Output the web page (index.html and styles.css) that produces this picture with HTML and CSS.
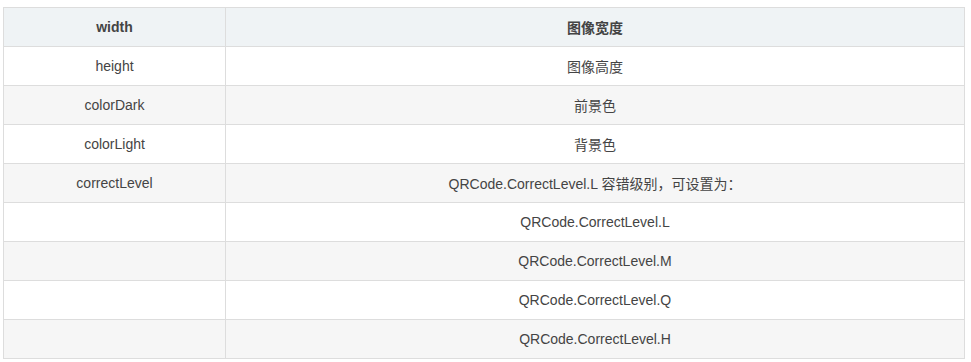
FILE: index.html
```html
<!DOCTYPE html>
<html lang="zh">
<head>
<meta charset="utf-8">
<link rel="stylesheet" href="styles.css">
</head>
<body>
<table class="params">
  <colgroup><col class="c1"><col class="c2"></colgroup>
  <thead>
    <tr><th>width</th><th>图像宽度</th></tr>
  </thead>
  <tbody>
    <tr><td>height</td><td>图像高度</td></tr>
    <tr><td>colorDark</td><td>前景色</td></tr>
    <tr><td>colorLight</td><td>背景色</td></tr>
    <tr><td>correctLevel</td><td>QRCode.CorrectLevel.L 容错级别，可设置为：</td></tr>
    <tr><td></td><td>QRCode.CorrectLevel.L</td></tr>
    <tr><td></td><td>QRCode.CorrectLevel.M</td></tr>
    <tr><td></td><td>QRCode.CorrectLevel.Q</td></tr>
    <tr><td></td><td>QRCode.CorrectLevel.H</td></tr>
  </tbody>
</table>
</body>
</html>
```
FILE: styles.css
```css
html, body {
  margin: 0;
  padding: 0;
  background: #fff;
}
body {
  font-family: "Liberation Sans", Arial, "Noto Sans CJK SC", sans-serif;
  font-size: 14px;
  color: #444;
}
.params {
  border-collapse: collapse;
  table-layout: fixed;
  width: 962px;
  margin: 7px 0 0 3px;
}
.params .c1 { width: 222px; }
.params th,
.params td {
  border: 1px solid #ddd;
  height: 39px;
  padding: 0 8px;
  text-align: center;
  vertical-align: middle;
  box-sizing: border-box;
}
.params th {
  background: #eff3f5;
  font-weight: bold;
  color: #444;
}
.params tbody tr:nth-child(even) td {
  background: #f6f6f6;
}
```
